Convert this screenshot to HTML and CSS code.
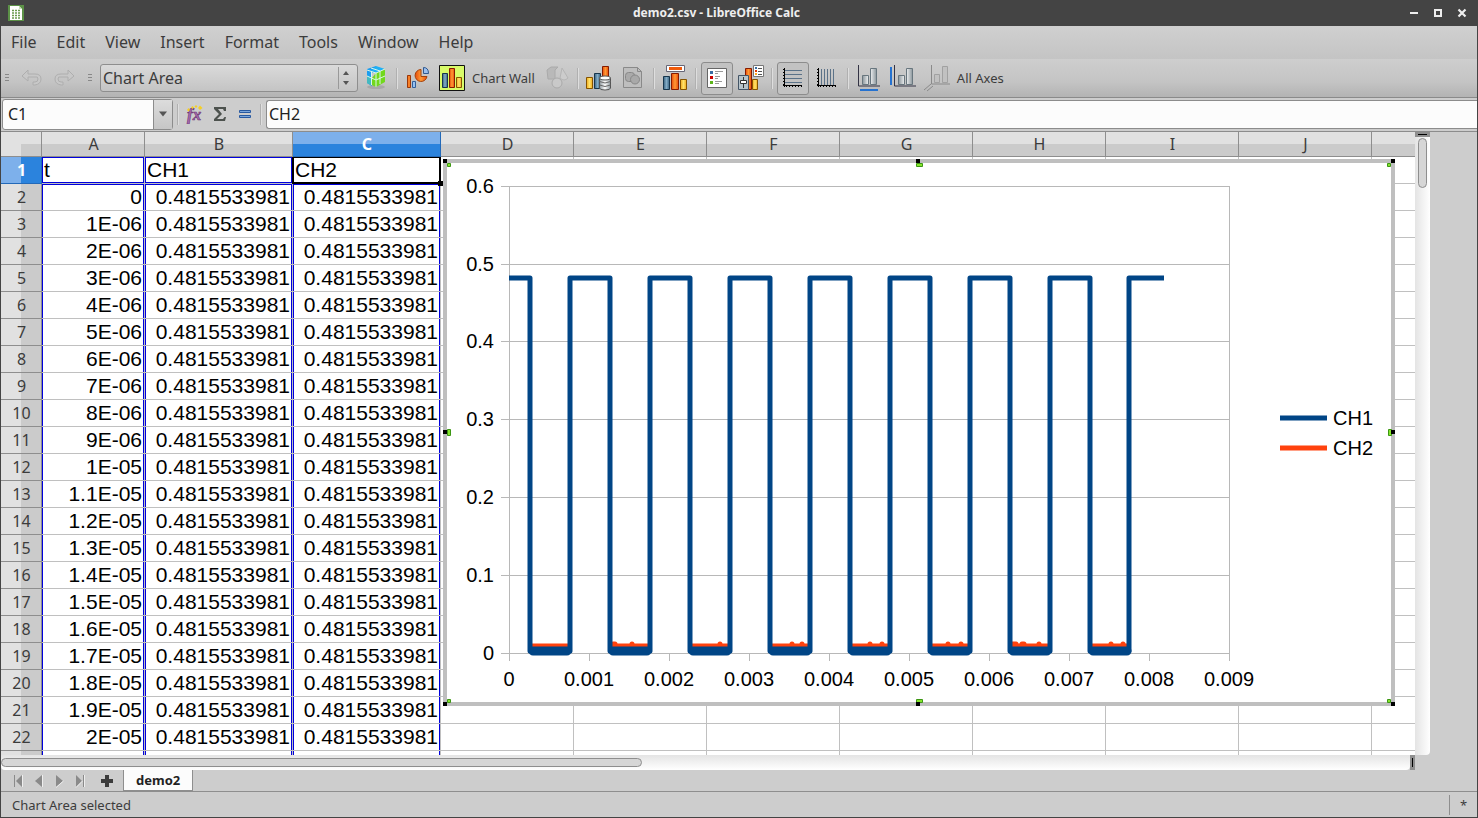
FILE: index.html
```
<!DOCTYPE html>
<html lang="en">
  <head>
    <meta charset="UTF-8" />
    <meta name="viewport" content="width=device-width, initial-scale=1.0" />
    <title>demo2.csv - LibreOffice Calc</title>
    <link rel="stylesheet" href="styles.css" />
  </head>
  <body>
    <header class="titlebar">
      <svg class="app-icon" width="16" height="16" viewBox="0 0 16 16">
        <rect width="16" height="16" fill="#5c9147" />
        <path d="M2 1h9l3 3v11H2z" fill="#fff" />
        <path d="M11 1v3h3z" fill="#c6dfb5" />
        <path d="M4 5.500h8M4 8h8M4 10.500h8M4 13h8" stroke="#6b9b4e" stroke-width="1.300" stroke-dasharray="2 1" />
      </svg>
      <h1 class="title">demo2.csv - LibreOffice Calc</h1>
      <div class="win-buttons">
        <button aria-label="Minimize"><svg width="10" height="10"><path d="M1 5h8" stroke="#eee" stroke-width="2" /></svg></button>
        <button aria-label="Maximize"><svg width="10" height="10"><path d="M2 2h6v6H2z" fill="none" stroke="#eee" stroke-width="2" /></svg></button>
        <button aria-label="Close"><svg width="10" height="10"><path d="M1.500 1.500l7 7M8.500 1.500l-7 7" stroke="#eee" stroke-width="2.200" /></svg></button>
      </div>
    </header>

    <nav class="menubar">
      <button>File</button>
      <button>Edit</button>
      <button>View</button>
      <button>Insert</button>
      <button>Format</button>
      <button>Tools</button>
      <button>Window</button>
      <button>Help</button>
    </nav>

    <!-- gradients shared by the toolbar icons -->
    <svg class="defs" width="0" height="0">
      <defs>
        <linearGradient id="blue"><stop offset="0" stop-color="#38617f" /><stop offset=".5" stop-color="#83acc6" /><stop offset="1" stop-color="#38617f" /></linearGradient>
        <linearGradient id="orange"><stop offset="0" stop-color="#e84a0a" /><stop offset=".5" stop-color="#ff9a35" /><stop offset="1" stop-color="#e84a0a" /></linearGradient>
        <linearGradient id="yellow"><stop offset="0" stop-color="#f1a81c" /><stop offset=".5" stop-color="#ffe36b" /><stop offset="1" stop-color="#f1a81c" /></linearGradient>
        <linearGradient id="steel"><stop offset="0" stop-color="#8b969c" /><stop offset=".5" stop-color="#fff" /><stop offset="1" stop-color="#8b969c" /></linearGradient>
      </defs>
    </svg>

    <div class="toolbar">
      <span class="grip"></span>
      <button class="tool" aria-label="Undo" disabled>
        <svg width="24" height="24"><path d="M2 10l6-6v4h7q6 0 6 5t-6 6h-2v-3h2q3 0 3-3t-3-2H8v4z" fill="#c8c8c8" stroke="#aeaeae" /></svg>
      </button>
      <button class="tool" aria-label="Redo" disabled>
        <svg width="24" height="24"><path d="M20 10l-6-6v4H7q-6 0-6 5t6 6h2v-3H7q-3 0-3-3t3-2h7v4z" fill="#c8c8c8" stroke="#aeaeae" /></svg>
      </button>
      <span class="grip wide"></span>
      <div class="element-box">
        <select aria-label="Select chart element"><option>Chart Area</option></select>
        <svg class="arrows" width="20" height="22"><path d="M.500 0v22" stroke="#999" /><path d="M5 8l3-4 3 4zM5 14l3 4 3-4z" fill="#555" /></svg>
      </div>
      <button class="tool" aria-label="3D View">
        <svg width="24" height="26">
          <ellipse cx="12" cy="22" rx="9" ry="2" fill="#a8a8a8" />
          <path d="M3 4l9-3v5L8 8v13l-5-3z" fill="#1b9df0" />
          <path d="M12 1l9 3-9 4-5-2z" fill="#1fb0f5" />
          <path d="M21 4v13l-9 5-4-2v-7l4-5z" fill="#72d81c" />
          <path d="M3 11l5 2v8l-5-3z" fill="#44b9c0" />
          <path d="M12 8v14M7 3l9 3v13M3 5l9 3 9-4M3 11l9 4 9-4M7.500 7v13" fill="none" stroke="#d9f6e6" />
        </svg>
      </button>
      <span class="sep"></span>
      <button class="tool" aria-label="Format Selection">
        <svg width="24" height="24">
          <path d="M1.500 9.500h3v12h-3z" fill="url(#orange)" stroke="#9b3709" />
          <path d="M6.500 15.500h3v6h-3z" fill="#9ac2ef" stroke="#315f9c" />
          <path d="M15 3.500a6 6 0 1 0 6 7h-6z" fill="url(#orange)" stroke="#a34009" />
          <path d="M17.500 1.500q5 0 5 6h-5z" fill="#9bc0ee" stroke="#31588e" />
        </svg>
      </button>
      <button class="tool" aria-label="Chart Wall">
        <svg width="26" height="26">
          <path d="M.500.500h25v25H.500z" fill="#d9fb69" stroke="#111" />
          <path d="M3.500 8.500h5v14h-5z" fill="url(#blue)" stroke="#17364d" />
          <path d="M10.500 3.500h5v19h-5z" fill="url(#orange)" stroke="#861b00" />
          <path d="M17.500 12.500h5v10h-5z" fill="url(#yellow)" stroke="#855400" />
        </svg>
      </button>
      <button class="tool-label">Chart Wall</button>
      <button class="tool" aria-label="Shapes" disabled>
        <svg width="24" height="24">
          <path d="M2 4l4-3h7l-3 3v9H3z" fill="#b9b9b9" stroke="#aaa" />
          <path d="M17 2l6 10q-4 4-8 0z" fill="#ccc" stroke="#b5b5b5" />
          <circle cx="12" cy="17" r="5" fill="#c9c9c9" stroke="#aaa" />
        </svg>
      </button>
      <span class="sep"></span>
      <button class="tool" aria-label="Data Table">
        <svg width="26" height="26">
          <path d="M.500 12.500h6v11h-6z" fill="url(#yellow)" stroke="#855400" />
          <path d="M8.500 8.500h6v15h-6z" fill="url(#blue)" stroke="#17364d" />
          <path d="M16.500 1.500h6v15h-6z" fill="url(#orange)" stroke="#861b00" />
          <path d="M13.500 13v10q0 2 5.500 2t5.500-2V13z" fill="url(#steel)" stroke="#555" />
          <ellipse cx="19" cy="13" rx="5.500" ry="2" fill="#fff" stroke="#555" />
          <path d="M13.500 16.500q5.500 3 11 0M13.500 20q5.500 3 11 0" fill="none" stroke="#666" />
        </svg>
      </button>
      <button class="tool" aria-label="Insert Object" disabled>
        <svg width="24" height="24">
          <path d="M2.500 1.500h14l4 4v16h-18z" fill="#bebebe" stroke="#898989" />
          <path d="M16.500 1.500v4h4" fill="none" stroke="#898989" />
          <rect x="4.500" y="6.500" width="9" height="9" rx="3" fill="#aaa" stroke="#888" />
          <circle cx="14" cy="13.500" r="4.500" fill="#a9a9a9" stroke="#888" />
        </svg>
      </button>
      <span class="sep"></span>
      <button class="tool" aria-label="Titles">
        <svg width="26" height="26">
          <path d="M4.500.500h18v6h-18z" fill="#fff" stroke="#667" />
          <path d="M7 3.500h13" stroke="#f05a0a" stroke-width="3" />
          <path d="M1.500 11.500h6v13h-6z" fill="url(#blue)" stroke="#17364d" />
          <path d="M9.500 8.500h7v16h-7z" fill="url(#orange)" stroke="#861b00" />
          <path d="M18.500 14.500h6v10h-6z" fill="url(#yellow)" stroke="#855400" />
        </svg>
      </button>
      <span class="sep"></span>
      <button class="tool pressed" aria-label="Legend On/Off" aria-pressed="true">
        <svg width="20" height="20">
          <path d="M.500.500h19v19H.500z" fill="#fff" stroke="#666" />
          <path d="M3 3h3v3H3z" fill="#376ca3" /><path d="M3 8h3v3H3z" fill="#c00" /><path d="M3 13h3v3H3z" fill="#5cb51a" />
          <path d="M8 3.500h8M8 5.500h3M8 8.500h5M8 10.500h3M8 13.500h7M8 15.500h4" stroke="#999" />
        </svg>
      </button>
      <button class="tool" aria-label="Legend">
        <svg width="28" height="26">
          <path d="M8.500 3.500h6v21h-6z" fill="url(#orange)" stroke="#861b00" />
          <path d="M15.500 14.500h5v10h-5z" fill="url(#yellow)" stroke="#855400" />
          <path d="M1.500 10.500h10v14h-10z" fill="#b6c3ca" stroke="#456" />
          <path d="M6.500 12v11" stroke="#333" /><path d="M3.500 15.500h6v3h-6z" fill="#fff" stroke="#333" />
          <path d="M16.500.500h10v11h-10z" fill="#fff" stroke="#777" />
          <path d="M18 2h2v2h-2z" fill="#376ca3" /><path d="M18 5h2v2h-2z" fill="#e33a00" /><path d="M18 8h2v2h-2z" fill="#ffa91f" />
          <path d="M21 3.500h4M21 6.500h4M21 9.500h4" stroke="#555" />
        </svg>
      </button>
      <span class="sep"></span>
      <button class="tool pressed" aria-label="Horizontal Grids" aria-pressed="true">
        <svg width="22" height="22">
          <path d="M3 3.500h17M3 7.500h17M3 11.500h17M3 15.500h17" stroke="#5b7288" />
          <path d="M2.500 1v19M1 18.500h19" stroke="#000" />
          <path d="M1.500 2v17" stroke="#000" stroke-dasharray="1 2" /><path d="M4 19.500h16" stroke="#000" stroke-dasharray="1 2" />
        </svg>
      </button>
      <button class="tool" aria-label="Vertical Grids">
        <svg width="22" height="22">
          <path d="M5.500 2v16M8.500 2v16M11.500 2v16M14.500 2v16M17.500 2v16" stroke="#5b7288" />
          <path d="M2.500 1v19M1 18.500h19" stroke="#000" />
          <path d="M1.500 2v17" stroke="#000" stroke-dasharray="1 2" /><path d="M4 19.500h16" stroke="#000" stroke-dasharray="1 2" />
        </svg>
      </button>
      <span class="sep"></span>
      <button class="tool" aria-label="X Axis">
        <svg width="26" height="28">
          <path d="M2.500 1v21H24" fill="none" stroke="#334" />
          <path d="M6.500 11.500h6v9h-6zM14.500 4.500h6v16h-6z" fill="url(#steel)" stroke="#68767e" />
          <path d="M4 26h18" stroke="#2572d0" stroke-width="2" />
        </svg>
      </button>
      <button class="tool" aria-label="Y Axis">
        <svg width="28" height="28">
          <path d="M5.500 1v21H27" fill="none" stroke="#334" />
          <path d="M9.500 11.500h6v9h-6zM17.500 4.500h6v16h-6z" fill="url(#steel)" stroke="#68767e" />
          <path d="M2 3v18" stroke="#2572d0" stroke-width="2" />
        </svg>
      </button>
      <button class="tool" aria-label="Z Axis" disabled>
        <svg width="28" height="28">
          <path d="M8.500 1v19H27M8 20l-7 6M10 22l-6 5" fill="none" stroke="#8a8a8a" />
          <path d="M11.500 10.500h5v8h-5zM19.500 2.500h5v16h-5z" fill="#c1c1c1" stroke="#a1a1a1" />
        </svg>
      </button>
      <button class="tool-label">All Axes</button>
    </div>

    <div class="formulabar">
      <div class="namebox">
        <input type="text" value="C1" aria-label="Name Box" />
        <button aria-label="Name list"><svg width="10" height="8"><path d="M1 1.500h8l-4 5z" fill="#555" /></svg></button>
      </div>
      <span class="sep"></span>
      <button class="fn" aria-label="Function Wizard">
        <svg width="20" height="20">
          <text x="2" y="16" font-family="Liberation Serif, serif" font-size="17" font-weight="bold" font-style="italic" fill="#a86bae" stroke="#6b3572" stroke-width=".600">fx</text>
          <path d="M2 6l1.500-2L5 6 3.500 7.500zM6 3.500L7.500 2 9 3.500 7.500 5zM9.500 2.500L11 1l1.500 1.500L11 4zM13 4l2-2.500L17.500 4 15 6z" fill="#f5cf24" />
        </svg>
      </button>
      <button class="fn" aria-label="Sum">
        <svg width="16" height="18"><path d="M2 2h12v4h-2l-1-2H6l4 5-5 5h6l1.500-2h1.500l-1 4H2v-2l5-5-5-5z" fill="#4d524e" /></svg>
      </button>
      <button class="fn" aria-label="Function">
        <svg width="14" height="12"><path d="M1.500 2.500h11v2h-11zM1.500 7.500h11v2h-11z" fill="#7ba6dc" stroke="#2859a0" /></svg>
      </button>
      <span class="sep"></span>
      <input class="formula" type="text" value="CH2" aria-label="Input line" />
    </div>

    <main class="workspace">
      <div class="sheet">
        <table class="cells">
          <colgroup>
            <col class="c-head" /><col class="c-a" /><col class="c-b" /><col class="c-b" />
            <col class="c-d" /><col class="c-d" /><col class="c-d" /><col class="c-d" /><col class="c-d" /><col class="c-d" /><col class="c-d" />
            <col />
          </colgroup>
          <thead>
            <tr>
              <td class="corner"></td>
              <th>A</th><th>B</th><th class="current">C</th><th>D</th><th>E</th><th>F</th>
              <th>G</th><th>H</th><th>I</th><th>J</th><th></th>
            </tr>
          </thead>
          <tbody>
            <tr class="labels">
              <th class="current">1</th>
              <td class="data">t</td><td class="data">CH1</td><td class="data cursor">CH2</td>
              <td></td><td></td><td></td><td></td><td></td><td></td><td></td><td></td>
            </tr>
          </tbody>
        </table>

        <div class="chart">
          <svg viewBox="0 0 952 547" width="952" height="547">
            <g class="grid">
              <path d="M58 27.500H786.500M58 105.500H786M58 182.500H786M58 260.500H786M58 338.500H786M58 416.500H786M58 494.500H786" />
              <path d="M66.500 27V502M786.500 27V502M146.500 494v8M226.500 494v8M306.500 494v8M386.500 494v8M466.500 494v8M546.500 494v8M626.500 494v8M706.500 494v8" />
            </g>
            <path class="ch2" d="M87 487h40M167 487h40M247 487h40M327 487h40M407 487h40M487 487h40M567 487h40M647 487h40" />
            <path class="ch2 noise" d="M170 485h2M189 485h0M277 485h0M349 485h0M359 485h0M427 485h0M439 485h0M505 485h0M518 485h0M569 485h4M579 485h2M596 485h0M668 485h0M680 485h0" />
            <path class="ch1" d="M66 119H87V492H127V119H167V492H207V119H247V492H287V119H327V492H367V119H407V492H447V119H487V492H527V119H567V492H607V119H647V492H686V119H721" />
            <path class="ch1 floor" d="M90 492h34M170 492h34M250 492h34M330 492h34M410 492h34M490 492h34M570 492h34M650 492h34" />
            <g class="y-labels">
              <text x="51" y="34">0.6</text><text x="51" y="112">0.5</text><text x="51" y="189">0.4</text><text x="51" y="267">0.3</text>
              <text x="51" y="345">0.2</text><text x="51" y="423">0.1</text><text x="51" y="501">0</text>
            </g>
            <g class="x-labels">
              <text x="66" y="527">0</text><text x="146" y="527">0.001</text><text x="226" y="527">0.002</text><text x="306" y="527">0.003</text>
              <text x="386" y="527">0.004</text><text x="466" y="527">0.005</text><text x="546" y="527">0.006</text><text x="626" y="527">0.007</text>
              <text x="706" y="527">0.008</text><text x="786" y="527">0.009</text>
            </g>
            <path class="ch1" d="M837 259h47" />
            <path class="ch2 key" d="M837 289h47" />
            <text x="890" y="266">CH1</text>
            <text x="890" y="296">CH2</text>
            <!-- selection frame and its handles -->
            <path class="frame" d="M2 2h948v543H2z" />
            <path class="green" d="M4.500 4.500h3v3h-3zM473.500 4.500h6v3h-6zM944.500 4.500h3v3h-3zM4.500 270.500h3v6h-3zM945.500 270.500h3v6h-3zM4.500 540.500h3v3h-3zM473.500 540.500h6v3h-6zM944.500 540.500h3v3h-3z" />
            <path d="M0 0h4v4H0zM473 0h4v4h-4zM948 0h4v4h-4zM0 271h4v4H0zM948 271h4v4h-4zM0 543h4v4H0zM473 543h4v4h-4zM948 543h4v4h-4z" />
          </svg>
        </div>
      </div>
      <div class="vscroll">
        <span class="split"></span>
        <span class="thumb"></span>
      </div>
      <div class="hscroll">
        <div class="track"><span class="thumb"></span></div>
        <span class="split"></span>
      </div>
    </main>

    <div class="tabbar">
      <button aria-label="First sheet"><svg width="12" height="14"><path d="M2.500 1v12" stroke="#8a8a8a" /><path d="M10 1v12L4 7z" fill="#8a8a8a" /><path d="M10.500 1v12" stroke="#eee" /></svg></button>
      <button aria-label="Previous sheet"><svg width="12" height="14"><path d="M9 1v12L2 7z" fill="#8a8a8a" /><path d="M9.500 1v12" stroke="#eee" /></svg></button>
      <button aria-label="Next sheet"><svg width="12" height="14"><path d="M2 1v12l7-6z" fill="#8a8a8a" /><path d="M2 13.500l7.500-6.500" stroke="#eee" /></svg></button>
      <button aria-label="Last sheet"><svg width="12" height="14"><path d="M1 1v12l6-6z" fill="#8a8a8a" /><path d="M8.500 1v12" stroke="#8a8a8a" /><path d="M9.500 1v12M1 13.500l6.500-6.500" stroke="#eee" /></svg></button>
      <button class="add" aria-label="Add sheet"><svg width="14" height="14"><path d="M7 1v12M1 7h12" stroke="#3c3c3c" stroke-width="4" /></svg></button>
      <button class="tab">demo2</button>
    </div>

    <footer class="statusbar">
      <span class="status">Chart Area selected</span>
      <span class="modified">*</span>
    </footer>

    <script>
      var tbody = document.querySelector(".cells tbody");
      // time column: steps of 1 microsecond
      function time(n) {
        if (n === 0) return "0";
        if (n < 10) return n + "E-06";
        return n / 10 + "E-05";
      }
      function addRow(head, a, b, c) {
        var tr = document.createElement("tr");
        var html = "<th>" + head + "</th>";
        html += '<td class="data">' + a + "</td>";
        html += '<td class="data">' + b + "</td>";
        html += '<td class="data">' + c + "</td>";
        for (var j = 0; j < 8; j++) {
          html += "<td></td>";
        }
        tr.innerHTML = html;
        tbody.appendChild(tr);
      }
      for (var i = 0; i < 21; i++) {
        addRow(i + 2, time(i), "0.4815533981", "0.4815533981");
      }
      // top edge of the next row
      addRow("", "", "", "");
    </script>
  </body>
</html>
```
FILE: styles.css
```
* {
  box-sizing: border-box;
}
body {
  margin: 0;
  height: 100vh;
  display: flex;
  flex-direction: column;
  overflow: hidden;
  border: 1px solid #444;
  border-top: 0;
  background: #cdcdcd;
  color: #3c3c3c;
  font-family: "Noto Sans", sans-serif;
  font-size: 16px;
}
button,
input,
select {
  font: inherit;
  color: inherit;
  margin: 0;
  padding: 0;
  border: 0;
  background: none;
  outline: none;
}
svg {
  display: block;
}
.defs {
  position: absolute;
}

/* title bar */
.titlebar {
  display: flex;
  align-items: center;
  height: 26px;
  padding: 0 10px 0 7px;
  background: #444;
}
.title {
  flex: 1;
  margin: 0;
  text-align: center;
  font-size: 12px;
  line-height: 16px;
  color: #eee;
}
.win-buttons {
  display: flex;
  gap: 14px;
}

/* menu */
.menubar {
  display: flex;
  height: 33px;
  background: linear-gradient(#d0d0d0, #c4c4c4);
}
.menubar button {
  padding: 0 10px 2px;
}

/* toolbar */
.toolbar {
  display: flex;
  align-items: center;
  gap: 2px;
  height: 39px;
  padding-left: 3px;
  background: linear-gradient(#cecece, #c4c4c4 60%, #b3b3b3);
  border-bottom: 1px solid #8a8a8a;
}
.grip {
  width: 10px;
  height: 8px;
  background: repeating-linear-gradient(#888 0 1px, transparent 1px 3px) 1px 0 / 4px 8px no-repeat;
}
.grip.wide {
  width: 14px;
  background-position-x: 4px;
}
.tool {
  width: 32px;
  height: 33px;
  display: flex;
  align-items: center;
  justify-content: center;
}
.tool.pressed {
  border: 1px solid #8c8c8c;
  border-radius: 3px;
  background: #c2c2c2;
}
.tool-label {
  padding: 0 4px 0 2px;
  font-size: 13px;
}
.sep {
  width: 6px;
  height: 21px;
  background: linear-gradient(90deg, #b0b0b0 50%, #dedede 50%) center / 2px 100% no-repeat;
}
.element-box {
  position: relative;
}
.element-box select {
  width: 258px;
  height: 28px;
  padding: 0 2px;
  appearance: none;
  border: 1px solid #8e8e8e;
  border-radius: 3px;
  background: linear-gradient(#dadada, #c4c4c4);
}
.arrows {
  position: absolute;
  top: 3px;
  right: 0;
  pointer-events: none;
}

/* formula bar */
.formulabar {
  display: flex;
  align-items: center;
  height: 34px;
  padding: 0 0 1px 1px;
  gap: 2px;
  border-bottom: 1px solid #8c8c8c;
}
.namebox {
  display: flex;
  height: 31px;
  border: 1px solid #8c8c8c;
  border-radius: 3px;
  background: #fcfcfc;
}
.namebox input {
  width: 150px;
  padding-left: 5px;
}
.namebox button {
  display: flex;
  align-items: center;
  justify-content: center;
  width: 19px;
  border-left: 1px solid #8c8c8c;
  background: linear-gradient(#dcdcdc, #c6c6c6);
}
.fn {
  display: flex;
  align-items: center;
  justify-content: center;
  width: 23px;
  height: 24px;
}
.formula {
  flex: 1;
  height: 29px;
  padding-left: 2px;
  border: 1px solid #8c8c8c;
  border-right: 0;
  border-radius: 3px 0 0 3px;
  background: #fcfcfc;
}
.formula,
.namebox input {
  color: #222;
}

/* sheet */
.workspace {
  flex: 1;
  min-height: 0;
  display: grid;
  grid-template-columns: 1fr 15px 47px;
  grid-template-rows: 1fr 15px;
}
.sheet {
  position: relative;
  min-width: 0;
  overflow: hidden;
  background: #fff;
}
.cells {
  width: 100%;
  table-layout: fixed;
  border-spacing: 0;
}
.c-head {
  width: 41px;
}
.c-a {
  width: 103px;
}
.c-b {
  width: 148px;
}
.c-d {
  width: 133px;
}
.cells th,
.cells td {
  height: 27px;
  padding: 0 2px;
  border-right: 1px solid #c0c0c0;
  border-bottom: 1px solid #c0c0c0;
  line-height: 24px;
  white-space: nowrap;
}
.cells th {
  padding: 0 0 0 1px;
  font-weight: normal;
  border-color: #8e8e8e;
  background: linear-gradient(90deg, #e1e1e1 20px, #cbcbcb 20px);
}
.cells thead th,
.cells .corner {
  height: 25px;
  background: linear-gradient(#e1e1e1 12px, #cbcbcb 12px);
}
.cells .corner {
  border-color: #8e8e8e;
  background: linear-gradient(#cbcbcb, #cbcbcb) 20px 12px no-repeat #e1e1e1;
}
.cells .current {
  color: #fff;
  font-weight: bold;
  border-color: #2369b8;
  background: linear-gradient(90deg, #7db0eb 20px, #2b83dd 20px);
}
.cells thead .current {
  background: linear-gradient(#7db0eb 12px, #2b83dd 12px);
}
.cells tr > :last-child {
  border-right: 0;
}
.cells .data {
  font-family: "Liberation Sans", Arial, sans-serif;
  font-size: 21px;
  line-height: 26px;
  color: #000;
  text-align: right;
  box-shadow: inset 1px 0 #00d, inset -1px 0 #00d;
}
.cells .labels .data {
  text-align: left;
  box-shadow: inset 0 0 0 1px #00d;
}
.cells .labels + tr .data {
  box-shadow: inset 1px 1px #00d, inset -1px 0 #00d;
}
.cells .cursor {
  position: relative;
}
.cursor::before {
  content: "";
  position: absolute;
  inset: 0 -1px -1px -1px;
  border: 2px solid #000;
  border-top-width: 1px;
}
.cursor::after {
  content: "";
  position: absolute;
  right: -3px;
  bottom: -3px;
  width: 5px;
  height: 5px;
  background: #000;
}

/* chart floats over the cells */
.chart {
  position: absolute;
  top: 27px;
  left: 442px;
  background: #fff;
  font-family: "Liberation Sans", Arial, sans-serif;
  font-size: 20px;
}
.grid,
.frame {
  fill: none;
  stroke: #b8b8b8;
}
.frame {
  stroke: #bfbfbf;
  stroke-width: 4;
}
.ch1,
.ch2 {
  fill: none;
  stroke: #004586;
  stroke-width: 5;
  stroke-linejoin: round;
}
.ch2 {
  stroke: #ff420e;
}
.floor {
  stroke-width: 9;
  stroke-linecap: round;
}
.noise {
  stroke-linecap: round;
}
.y-labels {
  text-anchor: end;
}
.x-labels {
  text-anchor: middle;
}
.green {
  fill: #86e62c;
  stroke: #3c9614;
}

/* scroll bars */
.vscroll {
  display: flex;
  flex-direction: column;
  align-items: center;
  gap: 1px;
  border-radius: 0 0 4px 0;
  background: linear-gradient(90deg, #e4e4e4, #fff);
}
.vscroll .split {
  width: 100%;
  height: 5px;
  background: linear-gradient(#000, #000) center / 9px 1px no-repeat #8f8f8f;
}
.thumb {
  border: 1px solid #8e8e8e;
  border-radius: 5px;
  background: #d6d6d6;
}
.vscroll .thumb {
  width: 9px;
  height: 50px;
}
.hscroll {
  grid-row: 2;
  display: flex;
}
.track {
  flex: 1;
  display: flex;
  align-items: center;
  border-radius: 0 0 4px 4px;
  background: linear-gradient(#e4e4e4, #fff);
}
.track .thumb {
  width: 45.5%;
  height: 9px;
}
.hscroll .split {
  width: 5px;
  background: linear-gradient(#000, #000) center / 1px 9px no-repeat #8f8f8f;
}

/* sheet tabs */
.tabbar {
  display: flex;
  align-items: center;
  gap: 9px;
  height: 22px;
  padding-left: 11px;
  border-bottom: 1px solid #8e8e8e;
}
.add {
  margin-left: 4px;
}
.tabbar .tab {
  align-self: flex-start;
  height: 21px;
  padding: 0 12px;
  border: 1px solid #8e8e8e;
  border-top: 0;
  background: #fcfcfc;
  color: #222;
  font-size: 13px;
  line-height: 20px;
  font-weight: bold;
}

/* status bar */
.statusbar {
  display: flex;
  align-items: center;
  justify-content: space-between;
  height: 25px;
  padding-left: 11px;
  font-size: 13px;
}
.modified {
  width: 28px;
  height: 20px;
  line-height: 20px;
  border-left: 1px solid #8e8e8e;
  text-align: center;
}
```
